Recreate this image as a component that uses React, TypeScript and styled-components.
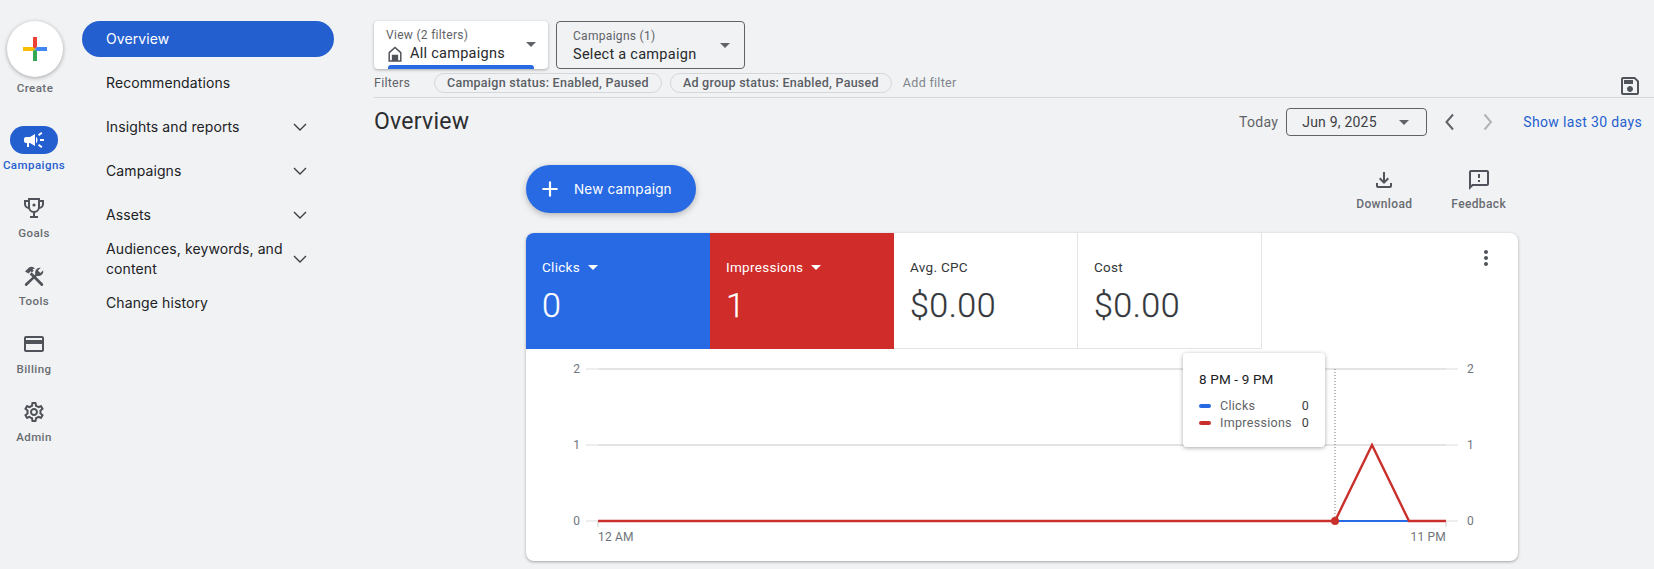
import styled, { createGlobalStyle } from "styled-components";
import {
  MdCampaign,
  MdOutlineCreditCard,
  MdOutlineSettings,
  MdOutlineSave,
  MdOutlineFileDownload,
  MdOutlineFeedback,
  MdMoreVert,
  MdAdd,
} from "react-icons/md";

const GlobalStyle = createGlobalStyle`
  html, body {
    margin: 0;
    padding: 0;
    background: #f1f2f4;
    font-family: Roboto, "Liberation Sans", sans-serif;
  }
`;

const Page = styled.div`
  display: flex;
  width: 1654px;
  height: 569px;
  overflow: hidden;
  background: #f1f2f4;
`;

const Rail = styled.aside`
  flex: none;
  width: 70px;
  display: flex;
  flex-direction: column;
  align-items: center;
  padding-top: 21px;
`;

const CreateCircle = styled.button`
  width: 56px;
  height: 56px;
  border: none;
  border-radius: 50%;
  background: #fff;
  box-shadow: 0 1px 4px rgba(0, 0, 0, 0.32);
  display: flex;
  align-items: center;
  justify-content: center;
  padding: 0;
`;

const CreateLabel = styled.span`
  margin: 4px 0 31px;
  height: 14px;
  line-height: 14px;
  font-size: 11.5px;
  font-weight: 500;
  letter-spacing: 0.45px;
  color: #686c71;
`;

const RailItem = styled.div`
  width: 68px;
  height: 68px;
  margin-right: 2px;
  display: flex;
  flex-direction: column;
  align-items: center;
`;

const RailIcon = styled.div<{ $active?: boolean }>`
  width: 48px;
  height: 28px;
  border-radius: 14px;
  display: flex;
  align-items: center;
  justify-content: center;
  font-size: 24px;
  background: ${p => (p.$active ? "#245fcf" : "transparent")};
  color: ${p => (p.$active ? "#fff" : "#50545a")};
`;

const RailLabel = styled.span<{ $active?: boolean }>`
  margin-top: 4px;
  line-height: 14px;
  font-size: 11.5px;
  font-weight: 500;
  letter-spacing: 0.45px;
  color: ${p => (p.$active ? "#245fcf" : "#686c71")};
`;

const Nav = styled.nav`
  flex: none;
  width: 252px;
  margin-left: 12px;
  padding-top: 21px;
  display: flex;
  flex-direction: column;
  gap: 8px;
  font-family: Inter, Roboto, sans-serif;
`;

const NavItem = styled.div<{ $active?: boolean; $tall?: boolean }>`
  display: flex;
  align-items: center;
  justify-content: space-between;
  height: ${p => (p.$tall ? "40px" : "36px")};
  margin: ${p => (p.$tall ? "-2px 0" : "0")};
  padding: 0 27px 0 24px;
  border-radius: 18px;
  font-size: 14px;
  line-height: 20px;
  letter-spacing: 0.1px;
  font-weight: 400;
  background: ${p => (p.$active ? "#245fcf" : "transparent")};
  color: ${p => (p.$active ? "#fff" : "#202124")};
`;

const NavText = styled.span`
  max-width: 184px;
`;

const Main = styled.main`
  flex: 1;
  min-width: 0;
  margin-left: 40px;
  display: flex;
  flex-direction: column;
`;

const TopBar = styled.div`
  display: flex;
  gap: 8px;
  padding-top: 21px;
`;

const Picker = styled.div<{ $selected?: boolean }>`
  position: relative;
  box-sizing: border-box;
  height: 48px;
  width: ${p => (p.$selected ? "174px" : "189px")};
  padding: ${p => (p.$selected ? "6px 0 0 12px" : "6px 0 0 16px")};
  border-radius: 4px;
  background: ${p => (p.$selected ? "#fff" : "transparent")};
  border: ${p => (p.$selected ? "none" : "1px solid #5f6368")};
  box-shadow: ${p => (p.$selected ? "0 1px 3px rgba(0,0,0,.3)" : "none")};
  overflow: hidden;
`;

const PickerLabel = styled.div`
  font-size: 12px;
  line-height: 16px;
  letter-spacing: 0.3px;
  color: #5f6368;
`;

const PickerValue = styled.div`
  display: flex;
  align-items: center;
  gap: 6px;
  font-size: 14.5px;
  line-height: 20px;
  font-weight: 400;
  letter-spacing: 0.27px;
  margin-top: 1px;
  color: #27292c;
`;

const Caret = styled.span<{ $color?: string }>`
  display: inline-block;
  width: 0;
  height: 0;
  border-left: 5px solid transparent;
  border-right: 5px solid transparent;
  border-top: 5px solid ${p => p.$color ?? "#5f6368"};
`;

const PickerCaret = styled(Caret)<{ $right: number }>`
  position: absolute;
  top: 21px;
  right: ${p => p.$right}px;
`;

const ActiveBar = styled.div`
  position: absolute;
  left: 14px;
  bottom: 0;
  width: 146px;
  height: 4px;
  border-radius: 3px 3px 0 0;
  background: #276ae3;
`;

const FilterRow = styled.div`
  display: flex;
  align-items: flex-start;
  height: 24px;
  margin-top: 4px;
  border-bottom: 1px solid #d5d7da;
`;

const FilterLabel = styled.span`
  width: 60px;
  line-height: 20px;
  font-size: 12.5px;
  letter-spacing: 0.25px;
  color: #5f6368;
`;

const Chip = styled.span`
  box-sizing: border-box;
  height: 20px;
  line-height: 18px;
  padding: 0 12px;
  margin-right: 8px;
  border: 1px solid #d5d7da;
  border-radius: 10px;
  font-size: 12.5px;
  font-weight: 500;
  letter-spacing: 0.26px;
  color: #5a5e64;
`;

const AddFilter = styled.span`
  line-height: 20px;
  margin-left: 3px;
  font-size: 12.5px;
  letter-spacing: 0.3px;
  color: #80868b;
`;

const SaveIcon = styled.span`
  margin: 1px 12px 0 auto;
  font-size: 24px;
  line-height: 0;
  color: #50545a;
`;

const HeaderRow = styled.div`
  display: flex;
  align-items: center;
  height: 48px;
  padding-right: 12px;
`;

const Title = styled.h1`
  margin: 0 auto 2px 0;
  font-size: 23px;
  font-weight: 400;
  letter-spacing: 0.25px;
  color: #2b2d30;
`;

const Today = styled.span`
  font-size: 14px;
  letter-spacing: 0.3px;
  color: #5f6368;
  margin-right: 8px;
`;

const DateBox = styled.div`
  box-sizing: border-box;
  width: 141px;
  height: 28px;
  display: flex;
  align-items: center;
  justify-content: space-between;
  padding: 0 17px 0 15px;
  border: 1px solid #5f6368;
  border-radius: 4px;
  font-size: 14px;
  letter-spacing: 0.2px;
  color: #3c4043;
`;

const ArrowGroup = styled.div`
  display: flex;
  margin: 0 16px 0 4px;
`;

const Arrow = styled.svg<{ $off?: boolean }>`
  width: 38px;
  height: 18px;
  fill: none;
  stroke-width: 2;
  stroke: ${p => (p.$off ? "#b0b3b7" : "#5f6368")};
`;

const ShowLink = styled.a`
  font-size: 14px;
  font-weight: 400;
  letter-spacing: 0.35px;
  color: #245fcf;
`;

const Content = styled.div`
  width: 992px;
  margin-left: 152px;
  padding-top: 19px;
`;

const ActionRow = styled.div`
  display: flex;
  align-items: flex-start;
  height: 48px;
  margin-bottom: 20px;
`;

const NewButton = styled.button`
  width: 170px;
  height: 48px;
  display: flex;
  align-items: center;
  gap: 11px;
  padding: 0 0 0 12px;
  border: none;
  border-radius: 24px;
  background: #276ae3;
  color: #fff;
  font-family: Inter, Roboto, sans-serif;
  font-size: 13.5px;
  font-weight: 400;
  letter-spacing: 0.2px;
  box-shadow: 0 2px 6px rgba(60, 64, 67, 0.35);
  svg {
    font-size: 26px;
    margin-left: -1px;
  }
`;

const Tools = styled.div`
  display: flex;
  gap: 39px;
  margin: 3px 12px 0 auto;
`;

const ToolButton = styled.div`
  display: flex;
  flex-direction: column;
  align-items: center;
  gap: 5px;
  font-size: 12px;
  font-weight: 500;
  letter-spacing: 0.35px;
  color: #686c71;
  svg {
    font-size: 24px;
    color: #50545a;
  }
`;

const Card = styled.section`
  height: 328px;
  border-radius: 8px;
  background: #fff;
  box-shadow: 0 1px 3px rgba(60, 64, 67, 0.45);
  overflow: hidden;
`;

const Scorecards = styled.div`
  display: flex;
  height: 116px;
  padding-right: 18px;
`;

const Score = styled.div<{ $bg?: string }>`
  box-sizing: border-box;
  width: 184px;
  padding: 26px 16px 0;
  background: ${p => p.$bg ?? "#fff"};
  color: ${p => (p.$bg ? "#fff" : "#33363a")};
  border-right: ${p => (p.$bg ? "none" : "1px solid #e3e4e6")};
  border-bottom: ${p => (p.$bg ? "none" : "1px solid #e3e4e6")};
`;

const ScoreLabel = styled.div`
  display: flex;
  align-items: center;
  gap: 8px;
  height: 16px;
  font-size: 13.5px;
  letter-spacing: 0.3px;
`;

const ScoreValue = styled.div`
  margin-top: 10px;
  font-size: 34px;
  font-weight: 300;
  line-height: 40px;
  letter-spacing: 0.5px;
  -webkit-text-stroke: 0.25px currentColor;
`;

const MoreButton = styled.span`
  margin: 13px 2px 0 auto;
  font-size: 24px;
  line-height: 0;
  color: #50545a;
`;

const ChartArea = styled.div`
  position: relative;
  height: 212px;
`;

const ChartSvg = styled.svg`
  display: block;
  font-family: Roboto, sans-serif;
  font-size: 12px;
`;

const Tooltip = styled.div`
  position: absolute;
  left: 657px;
  top: 4px;
  box-sizing: border-box;
  width: 142px;
  height: 94px;
  padding: 18px 16px 0;
  border-radius: 4px;
  background: #fff;
  box-shadow: 0 1px 4px rgba(60, 64, 67, 0.45);
`;

const TooltipTitle = styled.div`
  height: 16px;
  line-height: 16px;
  margin-bottom: 10px;
  font-size: 13.5px;
  font-weight: 400;
  letter-spacing: 0.15px;
  color: #202124;
`;

const TooltipRow = styled.div`
  display: flex;
  align-items: center;
  height: 17px;
  font-size: 12.5px;
  letter-spacing: 0.3px;
  color: #5f6368;
`;

const Swatch = styled.span<{ $color: string }>`
  width: 12px;
  height: 4px;
  margin-right: 9px;
  border-radius: 2px;
  background: ${p => p.$color};
`;

const TooltipValue = styled.span`
  margin-left: auto;
  color: #3c4043;
`;

function PlusLogo() {
  return (
    <svg width="24" height="24" viewBox="0 0 24 24">
      <polygon points="10,0 14,0 14,10 12,12 10,12" fill="#ea4335" />
      <polygon points="0,10 10,10 12,12 10,14 0,14" fill="#fbbc04" />
      <polygon points="10,14 12,12 14,14 14,24 10,24" fill="#34a853" />
      <polygon points="12,12 14,10 24,10 24,14 14,14" fill="#4285f4" />
    </svg>
  );
}

function ChevronDown() {
  return (
    <svg width="14" height="8" viewBox="0 0 14 8" fill="none" stroke="#3c4043" strokeWidth="1.4">
      <polyline points="1,1 7,7 13,1" />
    </svg>
  );
}

// trophy with the round dot in the cup, as in the reference
function TrophyIcon() {
  return (
    <svg width="24" height="24" viewBox="0 0 24 24" fill="none" stroke="currentColor" strokeWidth="2">
      <path d="M7 3h10v8a5 5 0 0 1-10 0z" />
      <path d="M7 5H3v3a4 4 0 0 0 4 4M17 5h4v3a4 4 0 0 1-4 4" />
      <path d="M12 16v4M8 21h8" />
      <circle cx="12" cy="9" r="1.6" fill="currentColor" stroke="none" />
    </svg>
  );
}

// crossed hammer and wrench
function ToolsIcon() {
  return (
    <svg width="24" height="24" viewBox="0 0 24 24" fill="currentColor">
      <path d="M3 7.5 7 3.5c1.6-1 3.6-1 5 .2l1 1-2.6.4 1.3 1.3L10 8.6 8.7 7.3 6.5 9.4 3 7.5z" />
      <path d="M7.6 10.2 9.6 8.2 20.8 19.4a1.4 1.4 0 0 1-2 2L7.6 10.2z" />
      <path d="M21.3 6.2 18.4 9.1 15.9 6.6l2.9-2.9a5 5 0 0 0-5.4 6.6L3.2 19.4a1.4 1.4 0 0 0 2 2l9.9-9.6a5 5 0 0 0 6.2-5.6z" />
    </svg>
  );
}

// small house with a doorway
function HomeIcon() {
  return (
    <svg width="18" height="18" viewBox="0 0 18 18" fill="none" stroke="#50545a" strokeWidth="1.5">
      <path d="M3.2 16V7.6L9 2.4l5.8 5.2V16z" />
      <path d="M6.6 16v-5.4h4.8V16" fill="#50545a" />
    </svg>
  );
}

const railItems = [
  { label: "Campaigns", icon: <MdCampaign />, active: true },
  { label: "Goals", icon: <TrophyIcon /> },
  { label: "Tools", icon: <ToolsIcon /> },
  { label: "Billing", icon: <MdOutlineCreditCard /> },
  { label: "Admin", icon: <MdOutlineSettings /> },
];

const navItems = [
  { label: "Overview", active: true },
  { label: "Recommendations" },
  { label: "Insights and reports", more: true },
  { label: "Campaigns", more: true },
  { label: "Assets", more: true },
  { label: "Audiences, keywords, and content", more: true, tall: true },
  { label: "Change history" },
];

function Chart() {
  const grid = [
    { y: 20, label: "2" },
    { y: 96, label: "1" },
    { y: 172, label: "0" },
  ];
  return (
    <ChartSvg width="992" height="212" viewBox="0 0 992 212">
      {grid.map(g => (
        <g key={g.label}>
          <line x1="60" x2="72" y1={g.y} y2={g.y} stroke="#eeeeee" strokeWidth="2" />
          <line x1="72" x2="920" y1={g.y} y2={g.y} stroke="#e4e4e4" strokeWidth="2" />
          <line x1="920" x2="932" y1={g.y} y2={g.y} stroke="#eeeeee" strokeWidth="2" />
          <text x="54" y={g.y + 4} textAnchor="end" fill="#70757a">{g.label}</text>
          <text x="941" y={g.y + 4} fill="#70757a">{g.label}</text>
        </g>
      ))}
      <line x1="72" x2="72" y1="172" y2="178" stroke="#e8e8e8" strokeWidth="2" />
      <line x1="920" x2="920" y1="172" y2="178" stroke="#e8e8e8" strokeWidth="2" />
      <line x1="809" x2="809" y1="20" y2="172" stroke="#70757a" strokeDasharray="1 2" />
      <line x1="809" x2="883" y1="172" y2="172" stroke="#276ae3" strokeWidth="2" />
      <polyline points="72,172 809,172 846,96 883,172 920,172" fill="none" stroke="#c9302c" strokeWidth="2.4" />
      <circle cx="809" cy="172" r="4" fill="#c9302c" />
      <text x="72" y="192" fill="#70757a" letterSpacing="0.2">12 AM</text>
      <text x="920" y="192" textAnchor="end" fill="#70757a" letterSpacing="0.2">11 PM</text>
    </ChartSvg>
  );
}

export default function App() {
  return (
    <Page>
      <GlobalStyle />
      <Rail>
        <CreateCircle><PlusLogo /></CreateCircle>
        <CreateLabel>Create</CreateLabel>
        {railItems.map(item => (
          <RailItem key={item.label}>
            <RailIcon $active={item.active}>{item.icon}</RailIcon>
            <RailLabel $active={item.active}>{item.label}</RailLabel>
          </RailItem>
        ))}
      </Rail>

      <Nav>
        {navItems.map(item => (
          <NavItem key={item.label} $active={item.active} $tall={item.tall}>
            <NavText>{item.label}</NavText>
            {item.more && <ChevronDown />}
          </NavItem>
        ))}
      </Nav>

      <Main>
        <TopBar>
          <Picker $selected>
            <PickerLabel>View (2 filters)</PickerLabel>
            <PickerValue><HomeIcon />All campaigns</PickerValue>
            <PickerCaret $right={12} />
            <ActiveBar />
          </Picker>
          <Picker>
            <PickerLabel>Campaigns (1)</PickerLabel>
            <PickerValue>Select a campaign</PickerValue>
            <PickerCaret $right={14} />
          </Picker>
        </TopBar>

        <FilterRow>
          <FilterLabel>Filters</FilterLabel>
          <Chip>Campaign status: Enabled, Paused</Chip>
          <Chip>Ad group status: Enabled, Paused</Chip>
          <AddFilter>Add filter</AddFilter>
          <SaveIcon><MdOutlineSave /></SaveIcon>
        </FilterRow>

        <HeaderRow>
          <Title>Overview</Title>
          <Today>Today</Today>
          <DateBox>Jun 9, 2025<Caret /></DateBox>
          <ArrowGroup>
            <Arrow viewBox="-14 0 38 18"><polyline points="8,1.5 1.5,9 8,16.5" /></Arrow>
            <Arrow $off viewBox="-14 0 38 18"><polyline points="1.5,1.5 8,9 1.5,16.5" /></Arrow>
          </ArrowGroup>
          <ShowLink>Show last 30 days</ShowLink>
        </HeaderRow>

        <Content>
          <ActionRow>
            <NewButton><MdAdd />New campaign</NewButton>
            <Tools>
              <ToolButton><MdOutlineFileDownload />Download</ToolButton>
              <ToolButton><MdOutlineFeedback />Feedback</ToolButton>
            </Tools>
          </ActionRow>

          <Card>
            <Scorecards>
              <Score $bg="#276ae3">
                <ScoreLabel>Clicks <Caret $color="#fff" /></ScoreLabel>
                <ScoreValue>0</ScoreValue>
              </Score>
              <Score $bg="#cf2c2a">
                <ScoreLabel>Impressions <Caret $color="#fff" /></ScoreLabel>
                <ScoreValue>1</ScoreValue>
              </Score>
              <Score>
                <ScoreLabel>Avg. CPC</ScoreLabel>
                <ScoreValue>$0.00</ScoreValue>
              </Score>
              <Score>
                <ScoreLabel>Cost</ScoreLabel>
                <ScoreValue>$0.00</ScoreValue>
              </Score>
              <MoreButton><MdMoreVert /></MoreButton>
            </Scorecards>
            <ChartArea>
              <Chart />
              <Tooltip>
                <TooltipTitle>8 PM - 9 PM</TooltipTitle>
                <TooltipRow><Swatch $color="#276ae3" />Clicks<TooltipValue>0</TooltipValue></TooltipRow>
                <TooltipRow><Swatch $color="#c9302c" />Impressions<TooltipValue>0</TooltipValue></TooltipRow>
              </Tooltip>
            </ChartArea>
          </Card>
        </Content>
      </Main>
    </Page>
  );
}
